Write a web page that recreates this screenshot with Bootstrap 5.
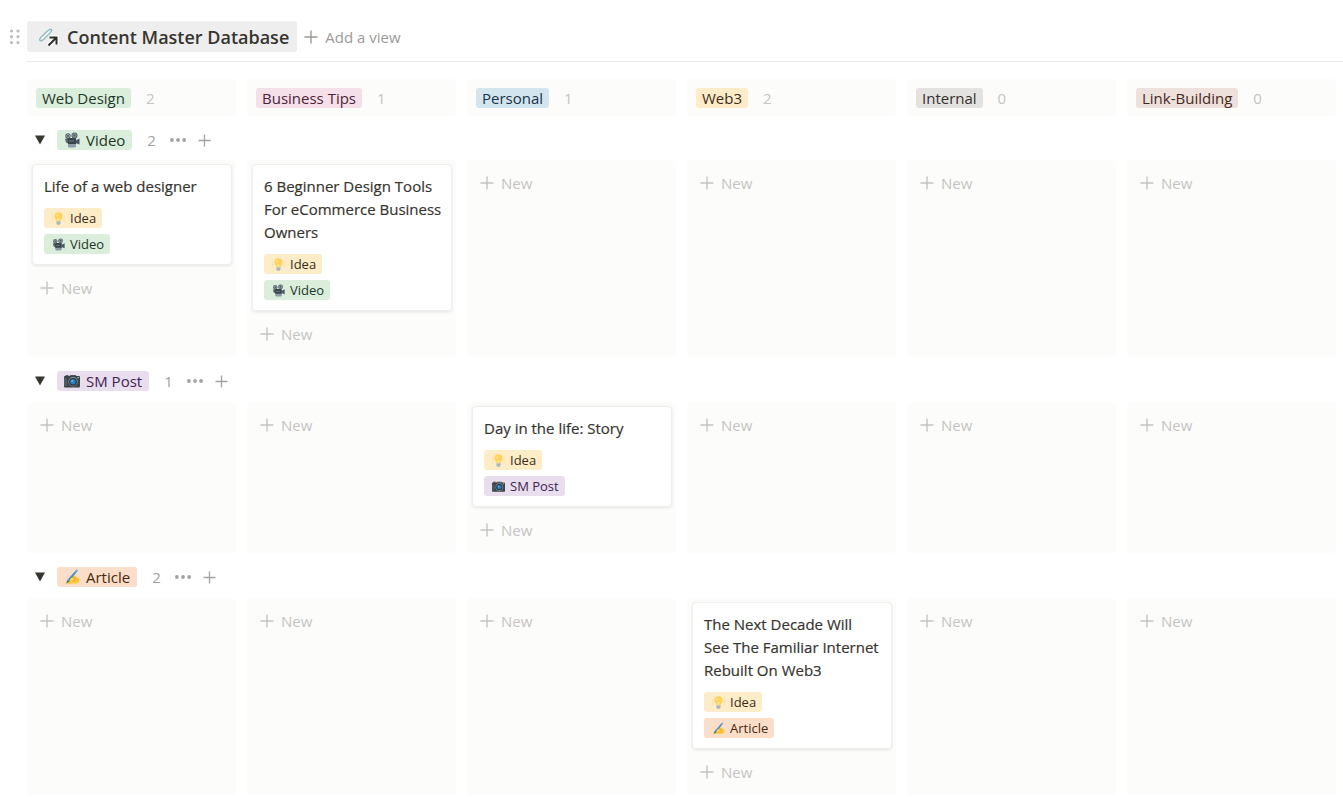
<!DOCTYPE html>
<html lang="en">
<head>
<meta charset="utf-8">
<meta name="viewport" content="width=device-width, initial-scale=1">
<title>Content Master Database</title>
<link rel="stylesheet" href="https://cdn.jsdelivr.net/npm/bootstrap@5.3.0/dist/css/bootstrap.min.css">
<style>
  body { font-family: "Open Sans", "Noto Sans", sans-serif; font-size: 15px; line-height: 20px; color: #37352f; background: #fff; }
  svg { display: block; flex: none; }
  .plain { border: 0; background: none; padding: 0; color: inherit; }

  /* Database title row */
  .db-head { padding: 21px 0 9px 9px; }
  .db-grip { width: 18px; color: #bebdbb; }
  .db-title { height: 31px; padding: 0 8px 0 11px; background: #eee; border-radius: 3px; gap: 8px; font-size: 18px; line-height: 24px; font-weight: 600; }
  .db-add { margin-left: 7px; gap: 7px; color: #9b9a97; }
  .db-rule { margin-left: 27px; border-top: 1px solid #e9e9e7; }

  /* Board */
  .board { padding: 17px 7px 4px 27px; }
  .lanes { display: grid; grid-template-columns: repeat(6, minmax(0, 1fr)); gap: 11px; }
  .lane-head { height: 37px; padding-left: 9px; gap: 15px; background: #fcfcfa; border-radius: 4px; color: #c5c4c2; }
  .lane { padding: 0 4px 0 5px; background: #fcfcfa; border-radius: 4px; }
  .group-head { height: 44px; padding: 4px 0 0 8px; color: #a3a29f; }
  section + section .group-head { height: 45px; padding-top: 3px; }
  .group-head .chip { margin: 0 15px 0 12px; }
  .more-btn { margin: 0 12px 0 14px; }

  .chip { display: inline-flex; align-items: center; height: 20px; padding: 0 6px; border-radius: 3px; font-weight: 400; font-size: 15px; line-height: 20px; white-space: nowrap; }
  .chip-lg { padding: 0 7px; gap: 6px; }
  .chip-sm { padding: 0 6px 0 8px; gap: 5px; font-size: 13px; }
  .c-green { background: #dbeddb; color: #1c3829; }
  .c-pink { background: #f5e0e9; color: #4c2337; }
  .c-blue { background: #d3e5ef; color: #183347; }
  .c-yellow { background: #fdecc8; color: #402c1b; }
  .c-gray { background: #e3e2e0; color: #32302c; }
  .c-brown { background: #eee0da; color: #442a1e; }
  .c-purple { background: #e8deee; color: #412454; }
  .c-orange { background: #fadec9; color: #49290e; }

  .task { margin: 4px 0 0; padding: 11px 8px 11px 12px; gap: 6px; background: #fff; border-radius: 4px; box-shadow: inset 0 0 0 1px #eeeeec, 0 1px 3px rgba(15, 15, 15, .1); }
  .task h3 { margin: 0 0 4px; font-size: 15px; line-height: 23px; font-weight: 400; -webkit-text-stroke: .2px currentColor; }
  .new-btn { width: 100%; height: 46px; padding-left: 8px; gap: 7px; color: #c5c4c2; }
</style>
</head>
<body>
<svg width="0" height="0" class="position-absolute" aria-hidden="true">
  <symbol id="plus" viewBox="0 0 14 14"><path d="M7 .5v13M.5 7h13" stroke="currentColor" stroke-width="1.4" fill="none"/></symbol>
  <symbol id="dots" viewBox="0 0 17 4"><g fill="currentColor"><circle cx="2" cy="2" r="2"/><circle cx="8.500" cy="2" r="2"/><circle cx="15" cy="2" r="2"/></g></symbol>
  <symbol id="tri" viewBox="0 0 10 9"><path d="M0 0h10L5 9z" fill="#37352f"/></symbol>
  <symbol id="film" viewBox="0 0 16 16">
    <path d="M4 10h8v4.500l-1 1H5l-1-1z" fill="#8c9cab"/>
    <path d="M2.500 6h9.500v6H4z" fill="#39434d"/>
    <path d="M11.500 8.500 15.500 6.500v6l-4-1.500z" fill="#4b5762"/>
    <path d="M1 6.500l3 1V11l-2-.5z" fill="#58636d"/>
    <circle cx="4" cy="4" r="2.700" fill="#56616b"/><circle cx="10.500" cy="3.500" r="3" fill="#56616b"/>
    <circle cx="4" cy="4" r="1.500" fill="none" stroke="#a9b5bf" stroke-width=".7"/><circle cx="10.500" cy="3.500" r="1.700" fill="none" stroke="#a9b5bf" stroke-width=".7"/>
    <path d="M5 9h5" stroke="#71808e"/>
  </symbol>
  <symbol id="photo" viewBox="0 0 16 16">
    <path d="M1.500 2h3v1.500h-3z" fill="#5c666e"/><path d="M5 3.500 6.500 2h5L13 3.500z" fill="#4a545c"/>
    <rect y="3" width="16" height="11.500" rx="1" fill="#39434a"/>
    <path d="M0 5h3v8H0z" fill="#4f5a62"/>
    <circle cx="9" cy="8.800" r="4.700" fill="#8b979f"/><circle cx="9" cy="8.800" r="3.900" fill="#27343e"/>
    <circle cx="9" cy="8.800" r="2.700" fill="#277dc4"/><circle cx="8.200" cy="7.900" r=".9" fill="#76bdf0"/>
    <path d="M13.500 4h1.500v1.200h-1.500z" fill="#b3bec5"/>
  </symbol>
  <symbol id="write" viewBox="0 0 16 16">
    <path d="M3.500 10.500 7 7l3.500-.5 2.500 1.500 2.500 2-.5 3-2.500 1.500H8.500L5.500 14.500l-3 .5L1 14l3-1z" fill="#fbc536"/>
    <path d="m8 11 3 1m-2-4 3 2m-8 3 3-1" stroke="#dc9a24" stroke-width=".7" fill="none"/>
    <path d="M12.500.5 14 1.500 5.500 12 2.500 14l1-3.300z" fill="#4a90c8"/>
    <path d="M12.500.5 14 1.500l-1.300 1.700-1.600-1.100z" fill="#80b7dc"/><path d="m2.500 14 .7-2.300L5 12.500z" fill="#46535d"/>
    <path d="m7 9-1.500 2.500 1.500 1.500L10 10z" fill="#ffd75b"/>
  </symbol>
  <symbol id="bulb" viewBox="0 0 16 16">
    <path d="M1 4v8M15 4v8" stroke="#f8dda4" stroke-width=".8"/>
    <path d="M8 .4a5 5 0 0 0-5 5c0 2.600 2.200 3.600 2.500 6.100h5c.3-2.500 2.500-3.500 2.500-6.100a5 5 0 0 0-5-5z" fill="#ffd25b"/>
    <path d="M6.500 7 8 8l1.500-1L8.800 11H7.200z" fill="#ffe79b"/><circle cx="6.500" cy="4" r="1.500" fill="#ffe385"/>
    <path d="M5.500 11.500h5v2.800l-1 1.500h-3l-1-1.500z" fill="#a9b7c1"/>
  </symbol>
</svg>

<header>
  <div class="db-head d-flex align-items-center">
    <button class="plain db-grip" aria-label="Move database">
      <svg width="12" height="16" viewBox="0 0 12 16" fill="currentColor"><circle cx="2.500" cy="2" r="1.600"/><circle cx="9" cy="2" r="1.600"/><circle cx="2.500" cy="7.700" r="1.600"/><circle cx="9" cy="7.700" r="1.600"/><circle cx="2.500" cy="13.500" r="1.600"/><circle cx="9" cy="13.500" r="1.600"/></svg>
    </button>
    <h1 class="db-title d-flex align-items-center m-0">
      <svg width="21" height="21" viewBox="0 0 21 21" fill="none">
        <path d="M2 14.500C.5 13 4 10 9 5.500c2-1.800 3.500-3 4.500-2S12.500 6.500 9 10c-3.500 3.500-5.500 6-7 4.500z" fill="#dfe9ea" stroke="#8db8c3" stroke-width="1.300"/>
        <path d="M3.500 13 11.500 5.500" stroke="#fff" stroke-width="1.200"/>
        <path d="M10.500 19.500 18 12M11.500 11.500h7v7" stroke="#fff" stroke-width="4.500"/>
        <path d="M10.500 19.500 18 12M11.500 11.500h7v7" stroke="#2f2d29" stroke-width="2"/>
      </svg>
      Content Master Database
    </h1>
    <button class="plain db-add d-flex align-items-center"><svg width="14" height="14"><use href="#plus"/></svg>Add a view</button>
  </div>
  <div class="db-rule"></div>
</header>

<main class="board">
  <div class="lanes">
    <div class="lane-head d-flex align-items-center"><span class="chip c-green">Web Design</span><span>2</span></div>
    <div class="lane-head d-flex align-items-center"><span class="chip c-pink">Business Tips</span><span>1</span></div>
    <div class="lane-head d-flex align-items-center"><span class="chip c-blue">Personal</span><span>1</span></div>
    <div class="lane-head d-flex align-items-center"><span class="chip c-yellow">Web3</span><span>2</span></div>
    <div class="lane-head d-flex align-items-center"><span class="chip c-gray">Internal</span><span>0</span></div>
    <div class="lane-head d-flex align-items-center"><span class="chip c-brown">Link-Building</span><span>0</span></div>
  </div>

  <section>
    <div class="group-head d-flex align-items-center">
      <button class="plain" aria-label="Collapse Video"><svg width="10" height="10"><use href="#tri"/></svg></button>
      <h2 class="chip chip-lg c-green"><svg width="16" height="16"><use href="#film"/></svg>Video</h2>
      <span>2</span>
      <button class="plain more-btn" aria-label="More options"><svg width="16" height="4"><use href="#dots"/></svg></button>
      <button class="plain" aria-label="Add item"><svg width="13" height="13"><use href="#plus"/></svg></button>
    </div>
    <div class="lanes">
      <div class="lane">
        <article class="task d-flex flex-column align-items-start">
          <h3>Life of a web designer</h3>
          <span class="chip chip-sm c-yellow"><svg width="13" height="13"><use href="#bulb"/></svg>Idea</span>
          <span class="chip chip-sm c-green"><svg width="13" height="13"><use href="#film"/></svg>Video</span>
        </article>
        <button class="plain new-btn d-flex align-items-center"><svg width="14" height="14"><use href="#plus"/></svg>New</button>
      </div>
      <div class="lane">
        <article class="task d-flex flex-column align-items-start">
          <h3>6 Beginner Design Tools For eCommerce Business Owners</h3>
          <span class="chip chip-sm c-yellow"><svg width="13" height="13"><use href="#bulb"/></svg>Idea</span>
          <span class="chip chip-sm c-green"><svg width="13" height="13"><use href="#film"/></svg>Video</span>
        </article>
        <button class="plain new-btn d-flex align-items-center"><svg width="14" height="14"><use href="#plus"/></svg>New</button>
      </div>
      <div class="lane"><button class="plain new-btn d-flex align-items-center"><svg width="14" height="14"><use href="#plus"/></svg>New</button></div>
      <div class="lane"><button class="plain new-btn d-flex align-items-center"><svg width="14" height="14"><use href="#plus"/></svg>New</button></div>
      <div class="lane"><button class="plain new-btn d-flex align-items-center"><svg width="14" height="14"><use href="#plus"/></svg>New</button></div>
      <div class="lane"><button class="plain new-btn d-flex align-items-center"><svg width="14" height="14"><use href="#plus"/></svg>New</button></div>
    </div>
  </section>

  <section>
    <div class="group-head d-flex align-items-center">
      <button class="plain" aria-label="Collapse SM Post"><svg width="10" height="10"><use href="#tri"/></svg></button>
      <h2 class="chip chip-lg c-purple"><svg width="16" height="16"><use href="#photo"/></svg>SM Post</h2>
      <span>1</span>
      <button class="plain more-btn" aria-label="More options"><svg width="16" height="4"><use href="#dots"/></svg></button>
      <button class="plain" aria-label="Add item"><svg width="13" height="13"><use href="#plus"/></svg></button>
    </div>
    <div class="lanes">
      <div class="lane"><button class="plain new-btn d-flex align-items-center"><svg width="14" height="14"><use href="#plus"/></svg>New</button></div>
      <div class="lane"><button class="plain new-btn d-flex align-items-center"><svg width="14" height="14"><use href="#plus"/></svg>New</button></div>
      <div class="lane">
        <article class="task d-flex flex-column align-items-start">
          <h3>Day in the life: Story</h3>
          <span class="chip chip-sm c-yellow"><svg width="13" height="13"><use href="#bulb"/></svg>Idea</span>
          <span class="chip chip-sm c-purple"><svg width="13" height="13"><use href="#photo"/></svg>SM Post</span>
        </article>
        <button class="plain new-btn d-flex align-items-center"><svg width="14" height="14"><use href="#plus"/></svg>New</button>
      </div>
      <div class="lane"><button class="plain new-btn d-flex align-items-center"><svg width="14" height="14"><use href="#plus"/></svg>New</button></div>
      <div class="lane"><button class="plain new-btn d-flex align-items-center"><svg width="14" height="14"><use href="#plus"/></svg>New</button></div>
      <div class="lane"><button class="plain new-btn d-flex align-items-center"><svg width="14" height="14"><use href="#plus"/></svg>New</button></div>
    </div>
  </section>

  <section>
    <div class="group-head d-flex align-items-center">
      <button class="plain" aria-label="Collapse Article"><svg width="10" height="10"><use href="#tri"/></svg></button>
      <h2 class="chip chip-lg c-orange"><svg width="16" height="16"><use href="#write"/></svg>Article</h2>
      <span>2</span>
      <button class="plain more-btn" aria-label="More options"><svg width="16" height="4"><use href="#dots"/></svg></button>
      <button class="plain" aria-label="Add item"><svg width="13" height="13"><use href="#plus"/></svg></button>
    </div>
    <div class="lanes">
      <div class="lane"><button class="plain new-btn d-flex align-items-center"><svg width="14" height="14"><use href="#plus"/></svg>New</button></div>
      <div class="lane"><button class="plain new-btn d-flex align-items-center"><svg width="14" height="14"><use href="#plus"/></svg>New</button></div>
      <div class="lane"><button class="plain new-btn d-flex align-items-center"><svg width="14" height="14"><use href="#plus"/></svg>New</button></div>
      <div class="lane">
        <article class="task d-flex flex-column align-items-start">
          <h3>The Next Decade Will See&nbsp;The Familiar Internet Rebuilt On Web3</h3>
          <span class="chip chip-sm c-yellow"><svg width="13" height="13"><use href="#bulb"/></svg>Idea</span>
          <span class="chip chip-sm c-orange"><svg width="13" height="13"><use href="#write"/></svg>Article</span>
        </article>
        <button class="plain new-btn d-flex align-items-center"><svg width="14" height="14"><use href="#plus"/></svg>New</button>
      </div>
      <div class="lane"><button class="plain new-btn d-flex align-items-center"><svg width="14" height="14"><use href="#plus"/></svg>New</button></div>
      <div class="lane"><button class="plain new-btn d-flex align-items-center"><svg width="14" height="14"><use href="#plus"/></svg>New</button></div>
    </div>
  </section>
</main>
<script src="https://cdn.jsdelivr.net/npm/bootstrap@5.3.0/dist/js/bootstrap.bundle.min.js"></script>
</body>
</html>
